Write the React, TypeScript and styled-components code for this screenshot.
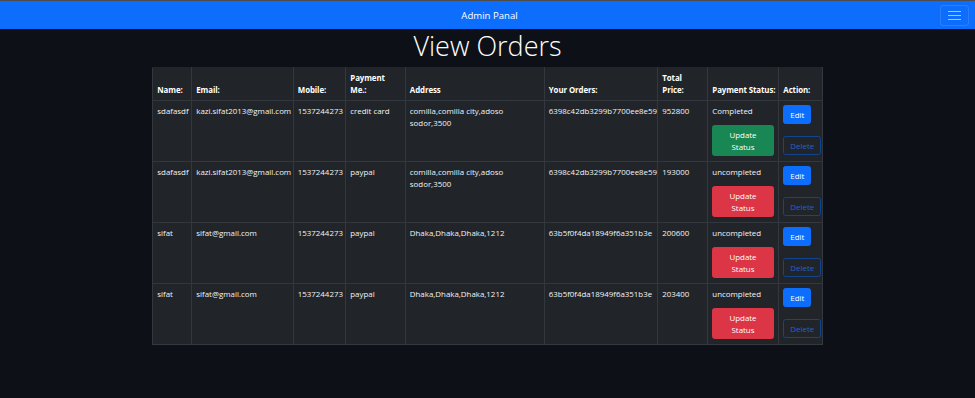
import styled, { createGlobalStyle } from 'styled-components';

type Order = {
	name: string;
	email: string;
	mobile: string;
	method: string;
	address: string;
	orderId: string;
	price: number;
	status: 'Completed' | 'uncompleted';
};

const orders: Order[] = [
	{
		name: 'sdafasdf',
		email: 'kazi.sifat2013@gmail.com',
		mobile: '1537244273',
		method: 'credit card',
		address: 'comilla,comilla city,adoso sodor,3500',
		orderId: '6398c42db3299b7700ee8e59',
		price: 952800,
		status: 'Completed',
	},
	{
		name: 'sdafasdf',
		email: 'kazi.sifat2013@gmail.com',
		mobile: '1537244273',
		method: 'paypal',
		address: 'comilla,comilla city,adoso sodor,3500',
		orderId: '6398c42db3299b7700ee8e59',
		price: 193000,
		status: 'uncompleted',
	},
	{
		name: 'sifat',
		email: 'sifat@gmail.com',
		mobile: '1537244273',
		method: 'paypal',
		address: 'Dhaka,Dhaka,Dhaka,1212',
		orderId: '63b5f0f4da18949f6a351b3e',
		price: 200600,
		status: 'uncompleted',
	},
	{
		name: 'sifat',
		email: 'sifat@gmail.com',
		mobile: '1537244273',
		method: 'paypal',
		address: 'Dhaka,Dhaka,Dhaka,1212',
		orderId: '63b5f0f4da18949f6a351b3e',
		price: 203400,
		status: 'uncompleted',
	},
];

const columns = [
	{ label: 'Name:', width: 39 },
	{ label: 'Email:', width: 101.5 },
	{ label: 'Mobile:', width: 52.5 },
	{ label: 'Payment Me.:', width: 59.5 },
	{ label: 'Address', width: 139 },
	{ label: 'Your Orders:', width: 113.5 },
	{ label: 'Total Price:', width: 50 },
	{ label: 'Payment Status:', width: 71, nowrap: true },
	{ label: 'Action:', width: 44 },
];

const App = () => {
	return (
		<>
			<GlobalStyle />
			<StyledNavbar>
				<StyledBrand>Admin Panal</StyledBrand>
				<StyledToggler aria-label="menu">
					<span />
					<span />
					<span />
				</StyledToggler>
			</StyledNavbar>

			<StyledTitle>View Orders</StyledTitle>

			<StyledTable>
				<colgroup>
					{columns.map((c) => (
						<col key={c.label} style={{ width: c.width }} />
					))}
				</colgroup>
				<thead>
					<tr>
						{columns.map((c) => (
							<StyledTh key={c.label} $nowrap={!!c.nowrap}>
								{c.label}
							</StyledTh>
						))}
					</tr>
				</thead>
				<tbody>
					{orders.map((o, i) => (
						<tr key={i}>
							<StyledTd>{o.name}</StyledTd>
							<StyledTd>{o.email}</StyledTd>
							<StyledTd>{o.mobile}</StyledTd>
							<StyledTd>{o.method}</StyledTd>
							<StyledTd>{o.address}</StyledTd>
							<StyledTd>{o.orderId}</StyledTd>
							<StyledTd>{o.price}</StyledTd>
							<StyledTd>
								<StyledStatus>{o.status}</StyledStatus>
								<StyledStatusButton $done={o.status === 'Completed'}>Update Status</StyledStatusButton>
							</StyledTd>
							<StyledTd>
								<StyledActions>
									<StyledEditButton>Edit</StyledEditButton>
									<StyledDeleteButton>Delete</StyledDeleteButton>
								</StyledActions>
							</StyledTd>
						</tr>
					))}
				</tbody>
			</StyledTable>
		</>
	);
};

export default App;

const GlobalStyle = createGlobalStyle`
	* {
		box-sizing: border-box;
	}
	body {
		margin: 0;
		background-color: #0d1117;
		color: #fff;
		font-family: 'Open Sans', 'Noto Sans', sans-serif;
	}
`;

const StyledNavbar = styled.nav`
	position: relative;
	display: flex;
	align-items: center;
	justify-content: center;
	height: 29px;
	border-top: 1px solid #4d4d4d;
	background-color: #0d6efd;
`;

const StyledBrand = styled.span`
	font-size: 9.6px;
	font-weight: 500;
	color: #fff;
	margin-left: 4px;
`;

const StyledToggler = styled.button`
	position: absolute;
	right: 6px;
	top: 4px;
	width: 29px;
	height: 21px;
	display: flex;
	flex-direction: column;
	justify-content: center;
	align-items: center;
	gap: 3px;
	padding: 0;
	background: transparent;
	border: 1px solid rgba(255, 255, 255, 0.12);
	border-radius: 3px;

	span {
		display: block;
		width: 13px;
		height: 1px;
		background-color: rgba(255, 255, 255, 0.6);
	}
`;

const StyledTitle = styled.h1`
	margin: 1px 0 5px;
	text-align: center;
	font-size: 27px;
	font-weight: 300;
	line-height: 32px;
	color: #fff;
`;

const StyledTable = styled.table`
	margin: 0 auto;
	width: 670px;
	table-layout: fixed;
	border-collapse: collapse;
	background-color: #212529;
	font-size: 7.9px;
	font-weight: 500;
	line-height: 12px;
	color: #f1f3f5;
`;

const StyledTh = styled.th<{ $nowrap: boolean }>`
	padding: 4px 4.3px 3.5px;
	border: 1px solid #32383e;
	border-top-color: #212529;
	text-align: left;
	vertical-align: bottom;
	font-weight: 700;
	letter-spacing: -0.1px;
	white-space: ${(p) => (p.$nowrap ? 'nowrap' : 'normal')};
	color: #fff;
`;

const StyledTd = styled.td`
	padding: 4.5px 4.3px;
	border: 1px solid #32383e;
	vertical-align: top;
`;

const StyledStatus = styled.div`
	margin-bottom: 8px;
`;

const StyledButton = styled.button`
	display: inline-block;
	padding: 2.5px 6px;
	border: 1px solid transparent;
	border-radius: 2.5px;
	font-family: inherit;
	font-size: 7.9px;
	font-weight: 500;
	line-height: 12px;
	color: #fff;
	cursor: pointer;
`;

const StyledStatusButton = styled(StyledButton)<{ $done: boolean }>`
	display: block;
	width: 100%;
	background-color: ${(p) => (p.$done ? '#198754' : '#dc3545')};
	border-color: ${(p) => (p.$done ? '#198754' : '#dc3545')};
`;

const StyledActions = styled.div`
	display: flex;
	flex-direction: column;
	align-items: flex-start;
	gap: 12px;
`;

const StyledEditButton = styled(StyledButton)`
	background-color: #0d6efd;
	border-color: #0d6efd;
`;

const StyledDeleteButton = styled(StyledButton)`
	background-color: transparent;
	border-color: #10458f;
	color: #2260cf;
`;
